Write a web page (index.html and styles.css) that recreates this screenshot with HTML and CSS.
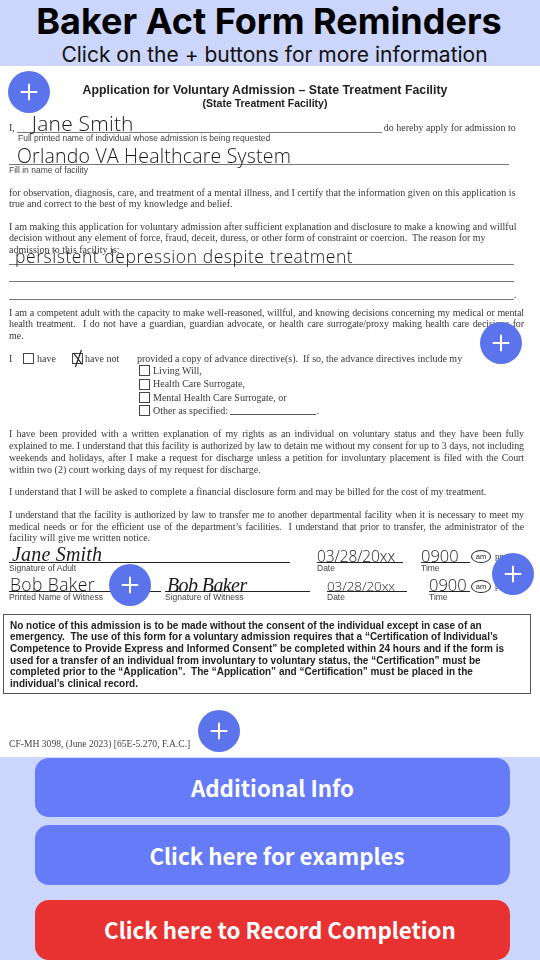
FILE: index.html
```html
<!DOCTYPE html>
<html lang="en">
<head>
<meta charset="utf-8">
<title>Baker Act Form Reminders</title>
<link rel="stylesheet" href="styles.css">
</head>
<body>
<header class="top">
  <h1>Baker Act Form Reminders</h1>
  <p>Click on the + buttons for more information</p>
</header>
<main class="form">
  <div class="scan">
    <h2>Application for Voluntary Admission – State Treatment Facility</h2>
    <h3>(State Treatment Facility)</h3>
    <div class="row r-name">
      <span class="t">I,</span>
      <span class="fill f-name"><span class="hand h-jane">Jane Smith</span></span>
      <span class="t">do hereby apply for admission to</span>
    </div>
    <div class="lbl l-name">Full printed name of individual whose admission is being requested</div>
    <div class="row r-fac">
      <span class="fill f-fac"><span class="hand h-fac">Orlando VA Healthcare System</span></span>
    </div>
    <div class="lbl">Fill in name of facility</div>

    <p class="para p1">
      <span class="ln">for observation, diagnosis, care, and treatment of a mental illness, and I certify that the information given on this application is</span>
      <span class="ln">true and correct to the best of my knowledge and belief.</span>
    </p>
    <p class="para p2">
      <span class="ln">I am making this application for voluntary admission after sufficient explanation and disclosure to make a knowing and willful</span>
      <span class="ln">decision without any element of force, fraud, deceit, duress, or other form of constraint or coercion.&nbsp; The reason for my</span>
      <span class="ln">admission to this facility is:</span>
    </p>
    <div class="row r-reason"><span class="fill f-reason"><span class="hand h-reason">persistent depression despite treatment</span></span></div>
    <div class="row r-blank"><span class="fill f-reason"></span></div>
    <div class="row r-blank2"><span class="fill f-reason"></span><span class="t">.</span></div>
    <p class="para p3">
      <span class="ln j">I am a competent adult with the capacity to make well-reasoned, willful, and knowing decisions concerning my medical or mental</span>
      <span class="ln j">health treatment.&nbsp; I do not have a guardian, guardian advocate, or health care surrogate/proxy making health care decisions for</span>
      <span class="ln">me.</span>
    </p>
    <div class="choice">
      <span class="t c-i">I</span>
      <span class="box"></span>
      <span class="t c-have">have</span>
      <span class="box checked">
        <svg viewBox="0 0 14 22" class="xmark" aria-hidden="true"><path d="M2 5 L12 18 M11 1 L4 21"/></svg>
      </span>
      <span class="t c-not">have not</span>
      <span class="t">provided a copy of advance directive(s).&nbsp; If so, the advance directives include my</span>
    </div>
    <ul class="opts">
      <li><span class="box"></span>Living Will,</li>
      <li><span class="box"></span>Health Care Surrogate,</li>
      <li><span class="box"></span>Mental Health Care Surrogate, or</li>
      <li><span class="box"></span>Other as specified: <span class="blank"></span>.</li>
    </ul>
    <p class="para p4">
      <span class="ln j">I have been provided with a written explanation of my rights as an individual on voluntary status and they have been fully</span>
      <span class="ln j">explained to me. I understand that this facility is authorized by law to detain me without my consent for up to 3 days, not including</span>
      <span class="ln j">weekends and holidays, after I make a request for discharge unless a petition for involuntary placement is filed with the Court</span>
      <span class="ln">within two (2) court working days of my request for discharge.</span>
    </p>
    <p class="para p5">
      <span class="ln">I understand that I will be asked to complete a financial disclosure form and may be billed for the cost of my treatment.</span>
    </p>
    <p class="para p6">
      <span class="ln j">I understand that the facility is authorized by law to transfer me to another departmental facility when it is necessary to meet my</span>
      <span class="ln j">medical needs or for the efficient use of the department’s facilities.&nbsp; I understand that prior to transfer, the administrator of the</span>
      <span class="ln">facility will give me written notice.</span>
    </p>

    <div class="sig s1">
      <div class="cell c-adult"><span class="fill"><span class="hand h-sig1">Jane Smith</span></span><span class="lbl">Signature of Adult</span></div>
      <div class="cell c-date"><span class="fill"><span class="hand h-date">03/28/20xx</span></span><span class="lbl">Date</span></div>
      <div class="cell c-time"><span class="fill"><span class="hand h-time">0900</span></span><span class="lbl">Time</span></div>
      <span class="ampm">am</span><span class="t pm">pm</span>
    </div>
    <div class="sig s2">
      <div class="cell c-wname"><span class="fill"><span class="hand h-bob">Bob Baker</span></span><span class="lbl">Printed Name of Witness</span></div>
      <div class="cell c-wsig"><span class="fill"><span class="hand h-sig2">Bob Baker</span></span><span class="lbl">Signature of Witness</span></div>
      <div class="cell c-date2"><span class="fill"><span class="hand h-date h-date2">03/28/20xx</span></span><span class="lbl">Date</span></div>
      <div class="cell c-time2"><span class="fill"><span class="hand h-time">0900</span></span><span class="lbl">Time</span></div>
      <span class="ampm">am</span><span class="t pm">pm</span>
    </div>

    <div class="notice">No notice of this admission is to be made without the consent of the individual except in case of an<br>emergency.&nbsp; The use of this form for a voluntary admission requires that a “Certification of Individual’s<br>Competence to Provide Express and Informed Consent” be completed within 24 hours and if the form is<br>used for a transfer of an individual from involuntary to voluntary status, the “Certification” must be<br>completed prior to the “Application”.&nbsp; The “Application” and “Certification” must be placed in the<br>individual’s clinical record.</div>
    <div class="code">CF-MH 3098, (June 2023) [65E-5.270, F.A.C.]</div>
  </div>

  <button class="plus p-a" aria-label="More information"><svg viewBox="0 0 24 24"><path d="M12 3V21M3 12H21"/></svg></button>
  <button class="plus p-b" aria-label="More information"><svg viewBox="0 0 24 24"><path d="M12 3V21M3 12H21"/></svg></button>
  <button class="plus p-c" aria-label="More information"><svg viewBox="0 0 24 24"><path d="M12 3V21M3 12H21"/></svg></button>
  <button class="plus p-d" aria-label="More information"><svg viewBox="0 0 24 24"><path d="M12 3V21M3 12H21"/></svg></button>
  <button class="plus p-e" aria-label="More information"><svg viewBox="0 0 24 24"><path d="M12 3V21M3 12H21"/></svg></button>
</main>
<footer class="actions">
  <button class="act act-1">Additional Info</button>
  <button class="act act-2">Click here for examples</button>
  <button class="act act-3 red">Click here to Record Completion</button>
</footer>
</body>
</html>
```
FILE: styles.css
```css
* { box-sizing: border-box; }
html, body { margin: 0; padding: 0; }
body {
  width: 540px;
  height: 960px;
  overflow: hidden;
  background: #ccd5fb;
  display: flex;
  flex-direction: column;
  font-family: "Inter", "Liberation Sans", sans-serif;
}
.top { height: 66px; text-align: center; color: #000; }
.top h1 { margin: 0; font-size: 36px; line-height: 42px; font-weight: 700; padding-right: 2px; }
.top p { margin: 0; padding-left: 9px; font-size: 21px; line-height: 26px; font-weight: 400; color: #111; }

.form { position: relative; height: 691px; background: #fff; flex: none; overflow: hidden; }
.scan {
  padding: 18px 0 0 9px;
  font-family: "Liberation Serif", serif;
  font-size: 10px;
  line-height: 11.7px;
  color: #383838;
  filter: blur(0.3px);
}
.scan h2, .scan h3 {
  margin: 0;
  font-family: "Liberation Sans", sans-serif;
  font-weight: 700;
  text-align: center;
  color: #222;
  width: 512px;
}
.scan h2 { font-size: 12.35px; line-height: 13px; }
.scan h3 { font-size: 10.5px; line-height: 13px; }

.t { white-space: pre; }
.row { display: flex; align-items: flex-end; }
.fill { position: relative; display: block; border-bottom: 1px solid #777; }
.hand {
  position: absolute;
  bottom: -2px;
  white-space: nowrap;
  font-family: "Open Sans", sans-serif;
  font-weight: 300;
  color: #1a1a1a;
  line-height: 1;
}
.lbl { display: block; font-family: "Liberation Sans", sans-serif; font-size: 8.5px; line-height: 10px; color: #444; white-space: nowrap; }

.r-name { height: 17px; margin-top: 5.5px; }
.r-name .t { line-height: 11px; }
.f-name { width: 365px; height: 17px; margin: 0 2px 0 2px; }
.h-jane { left: 15px; font-size: 21px; letter-spacing: 0.2px; }
.l-name { padding-left: 9px; }
.r-fac { height: 17px; margin-top: 5px; }
.f-fac { width: 500px; height: 17px; }
.h-fac { left: 8px; font-size: 19.5px; letter-spacing: 0.2px; }

.para { margin: 0; white-space: nowrap; }
.ln { display: block; width: 515px; }
.ln.j { text-align: justify; text-align-last: justify; white-space: normal; letter-spacing: -0.1px; }
.p1 { margin-top: 12px; }
.p2 { margin-top: 10.6px; }
.r-reason { height: 9px; }
.r-reason .fill { height: 9px; }
.f-reason { width: 505px; }
.h-reason { left: 6px; font-size: 17.5px; letter-spacing: 0.55px; }
.r-blank { height: 17px; }
.r-blank .fill { height: 17px; }
.r-blank2 { height: 18px; }
.r-blank2 .fill { height: 18px; }
.r-blank2 .t { line-height: 10px; }
.p3 { margin-top: 7px; }

.box { display: inline-block; position: relative; width: 11px; height: 11px; border: 1px solid #444; flex: none; }
.choice { display: flex; align-items: center; height: 11px; margin-top: 11.5px; }
.c-i { width: 14px; }
.c-have { margin-left: 3px; width: 35px; }
.c-not { margin-left: 2px; width: 52px; }
.xmark { position: absolute; left: -1px; top: -5px; width: 12px; height: 19px; overflow: visible; }
.xmark path { fill: none; stroke: #222; stroke-width: 1.4; }
.opts { list-style: none; margin: 0; padding: 0 0 0 130px; }
.opts li { display: flex; align-items: center; height: 13.3px; gap: 3px; white-space: pre; }
.blank { display: inline-block; width: 86px; height: 9px; border-bottom: 1px solid #555; margin-left: -3px; margin-right: -3px; }
.p4 { margin-top: 11px; }
.p5 { margin-top: 11px; }
.p6 { margin-top: 11px; }

.sig { display: flex; height: 30px; align-items: flex-start; position: relative; }
.s1 { margin-top: -1px; }
.cell { flex: none; }
.cell .fill { height: 20px; border-bottom-color: #222; }
.s2 { height: 29px; }
.s2 .cell .fill { height: 19px; }
.c-adult { width: 281px; margin-right: 27px; }
.c-date { width: 86px; margin-right: 18px; }
.c-time { width: 49px; }
.c-wname { width: 152px; margin-right: 4px; }
.c-wsig { width: 145px; margin-right: 17px; }
.c-date2 { width: 80px; margin-right: 22px; }
.c-time2 { width: 41px; }
.h-sig1 { left: 3px; font-family: "Liberation Serif", serif; font-style: italic; font-weight: 400; font-size: 20px; letter-spacing: 0.2px; }
.h-bob { left: 1px; font-size: 17.5px; letter-spacing: 0.4px; }
.h-sig2 { left: 2px; bottom: -4px; font-family: "Liberation Serif", serif; font-style: italic; font-size: 20px; letter-spacing: -0.6px; }
.h-date { left: 0; font-size: 15.5px; letter-spacing: -0.1px; }
.h-date2 { font-size: 13.5px; }
.h-time { left: 0; font-size: 16.5px; }
.ampm {
  flex: none;
  position: absolute;
  top: 7px;
  left: 462px;
  width: 20px;
  height: 13px;
  border: 1px solid #222;
  border-radius: 50%;
  font-family: "Liberation Sans", sans-serif;
  font-size: 7.5px;
  line-height: 11px;
  text-align: center;
  color: #222;
}
.pm { position: absolute; top: 8px; font-size: 9px; left: 486px; }

.notice {
  margin: 12px 0 0 -6px;
  width: 528px;
  height: 79.5px;
  border: 1.5px solid #555;
  padding: 4.5px 6px 0 6px;
  font-family: "Liberation Sans", sans-serif;
  font-weight: 700;
  font-size: 10px;
  line-height: 11.65px;
  color: #222;
  white-space: nowrap;
}
.code { margin-top: 44px; font-size: 9.6px; line-height: 12px; color: #444; }

.plus {
  position: absolute;
  width: 42px;
  height: 42px;
  padding: 0;
  border: 0;
  border-radius: 50%;
  background: #5b74ec;
  display: flex;
  align-items: center;
  justify-content: center;
}
.plus svg { width: 22px; height: 22px; }
.plus path { fill: none; stroke: #fff; stroke-width: 2.2; }
.p-a { left: 8px; top: 5px; }
.p-b { left: 480px; top: 256px; }
.p-c { left: 109px; top: 498px; }
.p-d { left: 492px; top: 487px; }
.p-e { left: 198px; top: 644px; }

.actions { flex: 1; padding-left: 35px; font-family: "Noto Sans CJK SC", "Noto Sans", sans-serif; }
.act {
  display: block;
  width: 475px;
  height: 60px;
  border: 0;
  border-radius: 14px;
  background: #657bf8;
  color: #fff;
  font-family: inherit;
  font-weight: 700;
  font-size: 22.3px;
  line-height: 58px;
  padding: 0;
}
.act-1 { margin-top: 1px; height: 59px; padding-bottom: 3px; }
.act-2 { margin-top: 8px; padding-left: 9px; }
.act-3 { margin-top: 15px; padding-left: 15px; padding-bottom: 2px; }
.red { background: #e83232; }
```
